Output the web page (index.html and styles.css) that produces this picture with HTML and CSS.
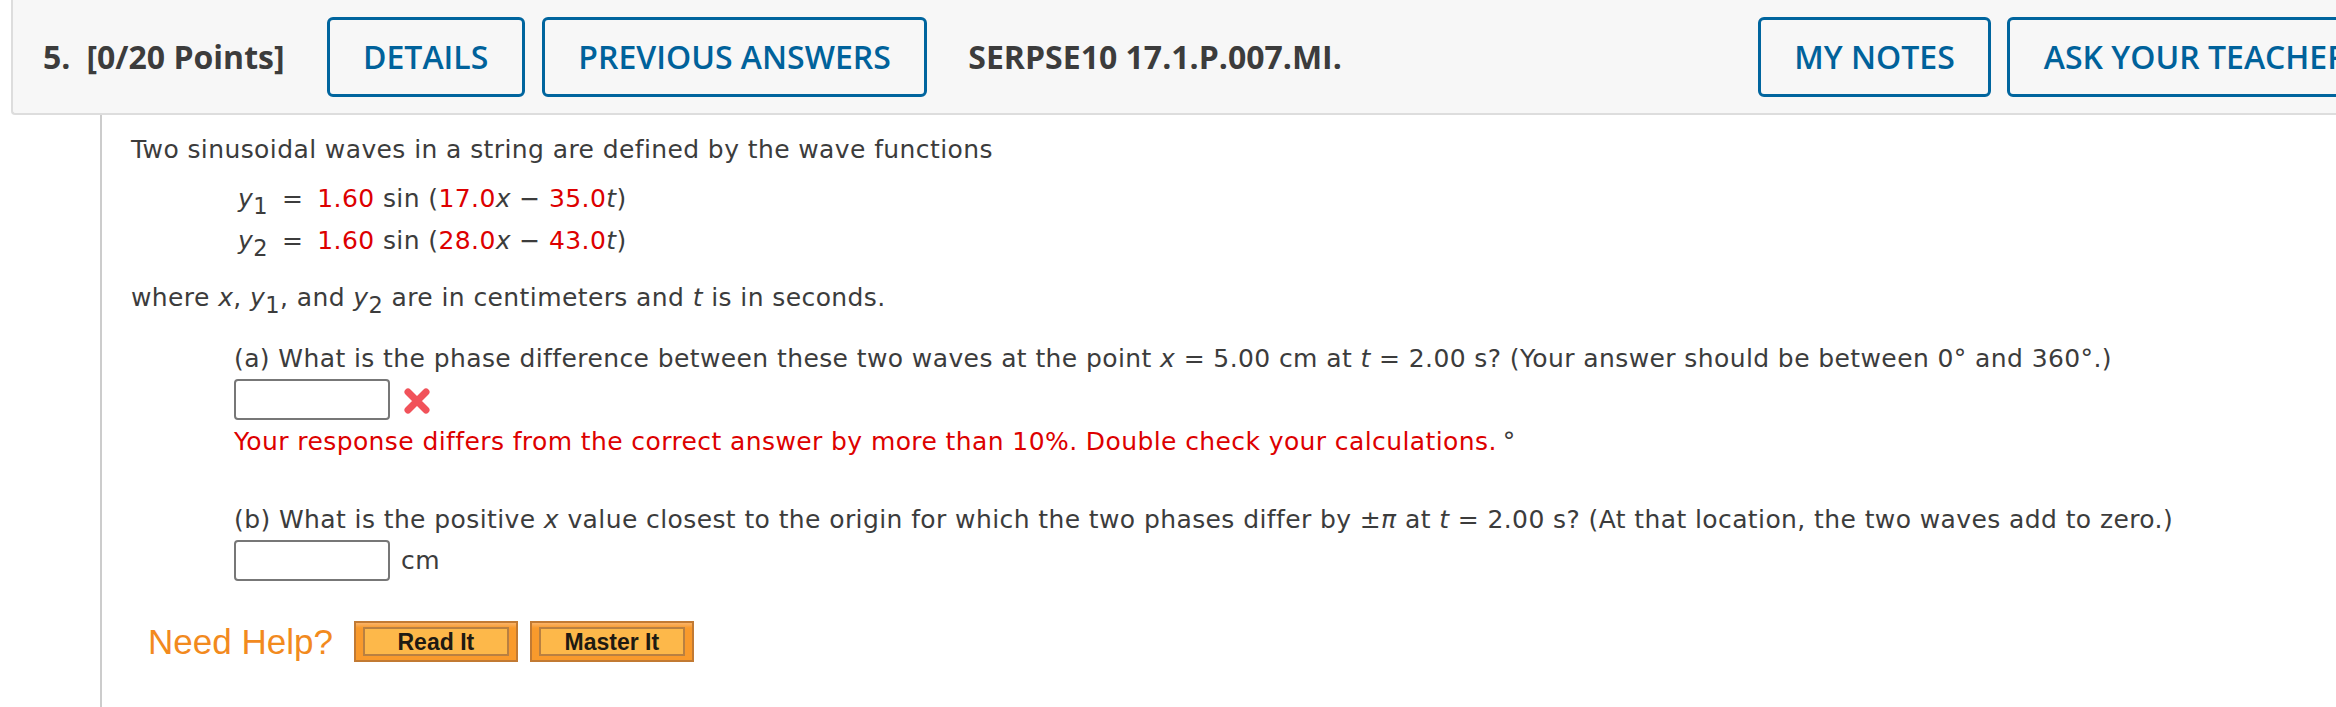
FILE: index.html
```html
<!DOCTYPE html>
<html>
<head>
<meta charset="utf-8">
<link rel="stylesheet" href="styles.css">
</head>
<body>
<div class="page">
  <div class="header">
    <div class="qnum"><span class="num">5.</span>[0/20 Points]</div>
    <div class="btn">DETAILS</div>
    <div class="btn btn-prev">PREVIOUS ANSWERS</div>
    <div class="code">SERPSE10 17.1.P.007.MI.</div>
    <div class="spacer"></div>
    <div class="btn">MY NOTES</div>
    <div class="btn btn-ask">ASK YOUR TEACHER</div>
  </div>
  <div class="content">
    <p class="intro">Two sinusoidal waves in a string are defined by the wave functions</p>
    <div class="eqs">
      <div class="lhs"><i>y</i><sub>1</sub></div><div class="eq">=</div>
      <div class="rhs"><span class="red">1.60</span> sin (<span class="red">17.0</span><i>x</i> &minus; <span class="red">35.0</span><i>t</i>)</div>
      <div class="lhs"><i>y</i><sub>2</sub></div><div class="eq">=</div>
      <div class="rhs"><span class="red">1.60</span> sin (<span class="red">28.0</span><i>x</i> &minus; <span class="red">43.0</span><i>t</i>)</div>
    </div>
    <p class="where">where <i>x</i>, <i>y</i><sub>1</sub>, and <i>y</i><sub>2</sub> are in centimeters and <i>t</i> is in seconds.</p>
    <div class="part part-a">
      <p class="question">(a) What is the phase difference between these two waves at the point <i>x</i> = 5.00 cm at <i>t</i> = 2.00 s? (Your answer should be between 0&deg; and 360&deg;.)</p>
      <div class="answer">
        <div class="input"></div>
        <svg class="xmark" width="28" height="28" viewBox="0 0 28 28"><path d="M5 5 L23 23 M23 5 L5 23" stroke="#f1525a" stroke-width="7" stroke-linecap="round"/></svg>
      </div>
      <p class="feedback"><span class="red">Your response differs from the correct answer by more than 10%. Double check your calculations.</span><span class="deg">&deg;</span></p>
    </div>
    <div class="part part-b">
      <p class="question">(b) What is the positive <i>x</i> value closest to the origin for which the two phases differ by &plusmn;<i>&pi;</i> at <i>t</i> = 2.00 s? (At that location, the two waves add to zero.)</p>
      <div class="answer">
        <div class="input"></div>
        <span class="unit">cm</span>
      </div>
    </div>
    <div class="help">
      <span class="need">Need Help?</span>
      <div class="hbtn"><div class="hbtn-inner">Read It</div></div>
      <div class="hbtn"><div class="hbtn-inner">Master It</div></div>
    </div>
  </div>
</div>
</body>
</html>
```
FILE: styles.css
```css
html, body {
  margin: 0;
  padding: 0;
  background: #ffffff;
  overflow: hidden;
}
.page {
  width: 2336px;
  height: 707px;
  overflow: hidden;
}
.header {
  margin-left: 11px;
  width: 2600px;
  height: 113px;
  background: #f7f7f7;
  border-left: 2px solid #dddddd;
  border-bottom: 2px solid #dddddd;
  border-bottom-left-radius: 4px;
  display: flex;
  align-items: center;
  font-family: "Open Sans", sans-serif;
  box-sizing: content-box;
}
.qnum {
  margin-left: 30px;
  font-weight: 700;
  font-size: 32px;
  color: #3c3c3c;
  margin-right: 42px;
  white-space: nowrap;
}
.qnum .num {
  margin-right: 16px;
}
.btn {
  height: 80px;
  box-sizing: border-box;
  border: 3px solid #00659e;
  border-radius: 6px;
  padding: 0 33.5px;
  display: flex;
  align-items: center;
  font-size: 32px;
  font-weight: 600;
  color: #00629b;
  white-space: nowrap;
  margin-right: 17px;
  flex: none;
}
.btn-prev {
  margin-right: 41px;
}
.code {
  font-weight: 700;
  font-size: 32px;
  color: #3c3c3c;
  white-space: nowrap;
}
.spacer {
  width: 416px;
  flex: none;
}
.btn-ask {
  margin-left: -1px;
}
.content {
  margin-left: 100px;
  border-left: 2px solid #cccccc;
  height: 592px;
  padding-left: 29px;
  font-family: "DejaVu Sans", Verdana, sans-serif;
  font-size: 25px;
  letter-spacing: 0.4px;
  color: #3c3c3c;
  line-height: 32px;
}
p {
  margin: 0;
}
.red {
  color: #dd0000;
}
sub {
  font-size: 90%;
  vertical-align: -0.32em;
  line-height: 0;
}
.intro {
  padding-top: 19px;
}
.eqs {
  display: grid;
  grid-template-columns: auto auto auto;
  justify-content: start;
  column-gap: 14px;
  row-gap: 10px;
  margin-left: 107px;
  margin-top: 17px;
}
.where {
  margin-top: 25px;
}
.part {
  margin-left: 103px;
}
.part-a {
  margin-top: 29px;
}
.answer {
  display: flex;
  align-items: center;
  margin-top: 4px;
}
.input {
  width: 156px;
  height: 41px;
  box-sizing: border-box;
  border: 2px solid #777777;
  border-radius: 4px;
  background: #ffffff;
}
.xmark {
  margin-left: 13px;
  margin-top: 2px;
}
.feedback {
  margin-top: 6px;
}
.deg {
  margin-left: 6px;
}
.part-b {
  margin-top: 46px;
}
.answer .unit {
  margin-left: 11px;
}
.help {
  display: flex;
  align-items: center;
  margin-left: 17px;
  margin-top: 40px;
}
.need {
  font-family: "Liberation Sans", Arial, sans-serif;
  font-size: 35px;
  letter-spacing: 0;
  color: #f28a1e;
  margin-right: 21px;
}
.hbtn {
  width: 164px;
  height: 41px;
  box-sizing: border-box;
  border: 2px solid #c27a33;
  background: linear-gradient(#fbb468 0, #f99a2c 5px, #f99a2c 100%);
  padding: 4px 7px 4px 7px;
  margin-right: 12px;
}
.hbtn-inner {
  height: 100%;
  box-sizing: border-box;
  border: 2px solid #b98041;
  background: #fdb84a;
  display: flex;
  align-items: center;
  justify-content: center;
  font-family: "Liberation Sans", Arial, sans-serif;
  font-weight: 700;
  font-size: 23px;
  letter-spacing: 0;
  color: #1e1a12;
}
```
